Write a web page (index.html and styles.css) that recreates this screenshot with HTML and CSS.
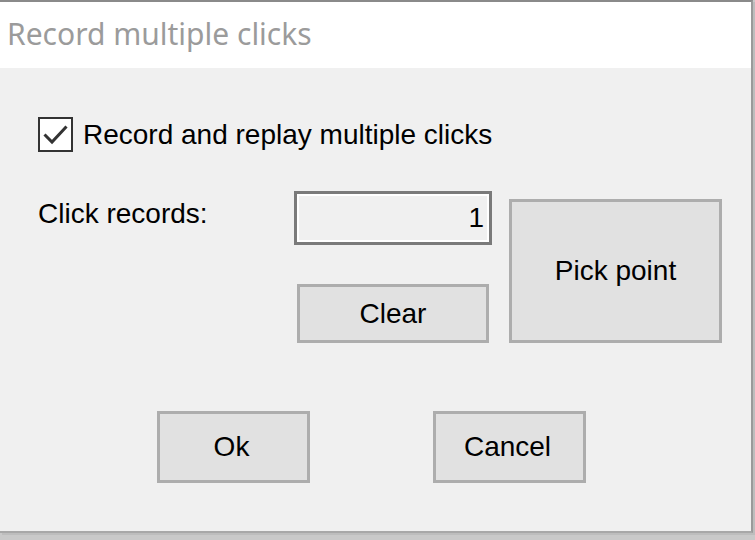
FILE: index.html
```html
<!DOCTYPE html>
<html>
<head>
<meta charset="utf-8">
<link rel="stylesheet" href="styles.css">
</head>
<body>
<div class="window">
  <div class="titlebar">Record multiple clicks</div>
  <div class="content">
    <label class="check-row">
      <span class="checkbox">
        <svg width="31" height="31" viewBox="0 0 31 31"><path d="M4.5 15.5 L12 23 L26.5 7.5" fill="none" stroke="#333" stroke-width="3"/></svg>
      </span>
      <span class="check-label">Record and replay multiple clicks</span>
    </label>
    <div class="grid">
      <div class="label">Click records:</div>
      <div class="textbox">1</div>
      <div class="btn pick">Pick point</div>
      <div class="btn clear">Clear</div>
    </div>
    <div class="actions">
      <div class="btn action">Ok</div>
      <div class="btn action">Cancel</div>
    </div>
  </div>
</div>
</body>
</html>
```
FILE: styles.css
```css
html, body {
  margin: 0;
  padding: 0;
  background: #c9c9c9;
  width: 755px;
  height: 540px;
  overflow: hidden;
}
.window {
  width: 751px;
  border-top: 2px solid #8a8a8a;
  border-right: 2px solid #9a9a9a;
  border-bottom: 2px solid #a8a8a8;
  box-shadow: 2px 2px 0 #bdbdbd;
  font-family: "Liberation Sans", Arial, sans-serif;
}
.titlebar {
  height: 66px;
  background: #ffffff;
  color: #9b9b9b;
  font-family: "Noto Sans", "Open Sans", sans-serif;
  font-size: 30px;
  line-height: 64px;
  padding-left: 7px;
}
.content {
  background: #f0f0f0;
  height: 463px;
  padding-left: 38px;
  box-sizing: border-box;
  padding-top: 49px;
  color: #000;
  font-size: 28px;
}
.check-row {
  display: flex;
  align-items: center;
  height: 35px;
  gap: 10px;
}
.checkbox {
  width: 31px;
  height: 31px;
  border: 2px solid #333;
  background: #fff;
  display: block;
}
.checkbox svg { display: block; }
.check-label { line-height: 35px; }
.grid {
  margin-top: 39px;
  display: grid;
  grid-template-columns: 239px 198px 213px;
  grid-template-rows: 54px 59px;
  column-gap: 17px;
  row-gap: 39px;
}
.label {
  line-height: 46px;
}
.textbox {
  border: 3px solid #7a7a7a;
  box-shadow: inset 0 0 0 2px #ffffff;
  background: #f0f0f0;
  text-align: right;
  padding-right: 5px;
  line-height: 48px;
}
.btn {
  border: 3px solid #adadad;
  background: #e1e1e1;
  display: flex;
  align-items: center;
  justify-content: center;
  box-sizing: border-box;
}
.pick {
  grid-column: 3;
  grid-row: 1 / span 2;
  align-self: end;
  height: 144px;
}
.clear {
  grid-column: 2;
  grid-row: 2;
  margin: 0 3px;
}
.actions {
  display: flex;
  gap: 123px;
  margin-top: 68px;
  padding-left: 119px;
}
.action {
  width: 153px;
  height: 72px;
  padding-right: 4px;
}
```
